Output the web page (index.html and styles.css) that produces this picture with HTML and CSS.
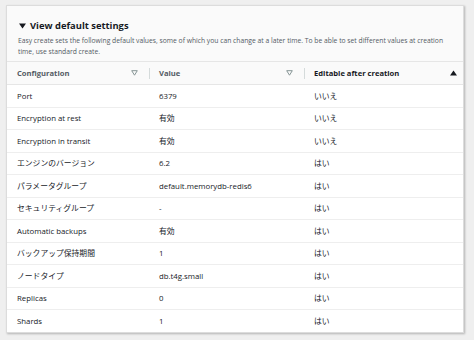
FILE: index.html
```html
<!DOCTYPE html>
<html lang="ja">

<head>
    <meta charset="utf-8">
    <title>View default settings</title>
    <link rel="stylesheet" href="styles.css">
</head>

<body>
    <section class="panel">
        <div class="panel-head">
            <h2>
                <svg class="caret" width="7" height="6" viewBox="0 0 7 6"><path d="M0 0.5h7L3.5 5.5z" fill="#16191f"/></svg>
                View default settings
            </h2>
            <p class="desc">Easy create sets the following default values, some of which you can change at a later time. To be able to set different values at creation time, use standard create.</p>
        </div>

        <table class="settings">
            <colgroup>
                <col class="c1">
                <col class="c2">
                <col class="c3">
            </colgroup>
            <thead>
                <tr>
                    <th>
                        <div class="th-in">
                            <span>Configuration</span>
                            <svg class="sort" width="7" height="6" viewBox="0 0 7 6"><path d="M0.7 0.7h5.6L3.5 5.2z" fill="none" stroke="#879596" stroke-width="1"/></svg>
                        </div>
                    </th>
                    <th>
                        <div class="th-in">
                            <span>Value</span>
                            <svg class="sort" width="7" height="6" viewBox="0 0 7 6"><path d="M0.7 0.7h5.6L3.5 5.2z" fill="none" stroke="#879596" stroke-width="1"/></svg>
                        </div>
                    </th>
                    <th class="sorted">
                        <div class="th-in">
                            <span>Editable after creation</span>
                            <svg class="sort" width="7" height="6" viewBox="0 0 7 6"><path d="M0 5.5h7L3.5 0.5z" fill="#16191f"/></svg>
                        </div>
                    </th>
                </tr>
            </thead>
            <tbody>
                <tr><td>Port</td><td>6379</td><td>いいえ</td></tr>
                <tr><td>Encryption at rest</td><td>有効</td><td>いいえ</td></tr>
                <tr><td>Encryption in transit</td><td>有効</td><td>いいえ</td></tr>
                <tr><td>エンジンのバージョン</td><td>6.2</td><td>はい</td></tr>
                <tr><td>パラメータグループ</td><td>default.memorydb-redis6</td><td>はい</td></tr>
                <tr><td>セキュリティグループ</td><td>-</td><td>はい</td></tr>
                <tr><td>Automatic backups</td><td>有効</td><td>はい</td></tr>
                <tr><td>バックアップ保持期間</td><td>1</td><td>はい</td></tr>
                <tr><td>ノードタイプ</td><td>db.t4g.small</td><td>はい</td></tr>
                <tr><td>Replicas</td><td>0</td><td>はい</td></tr>
                <tr><td>Shards</td><td>1</td><td>はい</td></tr>
            </tbody>
        </table>
    </section>
</body>

</html>
```

FILE: styles.css
```css
body {
    margin: 0;
    padding: 5px 10px 8px 6px;
    background-color: #efefef;
    font-family: 'Open Sans', 'Noto Sans CJK JP', sans-serif;
    color: #16191f;
}

.panel {
    background-color: #fafafa;
    border: 1px solid #dcdcdc;
    box-shadow: 1px 1px 2px rgba(0, 0, 0, 0.25);
}

.panel-head {
    padding: 12px 11px 4px 11px;
}

h2 {
    margin: 0;
    display: flex;
    align-items: center;
    gap: 4px;
    font-size: 9.4px;
    font-weight: 700;
    line-height: 15px;
}

.caret {
    margin-left: 1px;
}

.desc {
    margin: 2px 0 0 0;
    font-size: 6.75px;
    line-height: 11px;
    color: #545b64;
}

.settings {
    width: 100%;
    border-collapse: collapse;
    table-layout: fixed;
    font-size: 7.8px;
}

.c1 {
    width: 142px;
}

.c2 {
    width: 155px;
}

th {
    height: 22px;
    padding: 0 11px 0 10px;
    text-align: left;
    font-size: 7.6px;
    font-weight: 700;
    line-height: 10px;
    color: #545b64;
    background-color: #fafafa;
    border-top: 1px solid #e6e6e6;
    border-bottom: 1px solid #e6e6e6;
}

th + th {
    background-image: linear-gradient(#d5dbdb, #d5dbdb);
    background-size: 1px 11px;
    background-position: left center;
    background-repeat: no-repeat;
}

th.sorted {
    color: #16191f;
    padding-right: 6px;
}

.th-in {
    display: flex;
    align-items: center;
    justify-content: space-between;
}

td {
    height: 21.5px;
    padding: 0 10px;
    line-height: 10px;
    background-color: #ffffff;
    border-bottom: 1px solid #eeeeee;
    color: #16191f;
}

tbody tr:last-child td {
    border-bottom: none;
}
```
